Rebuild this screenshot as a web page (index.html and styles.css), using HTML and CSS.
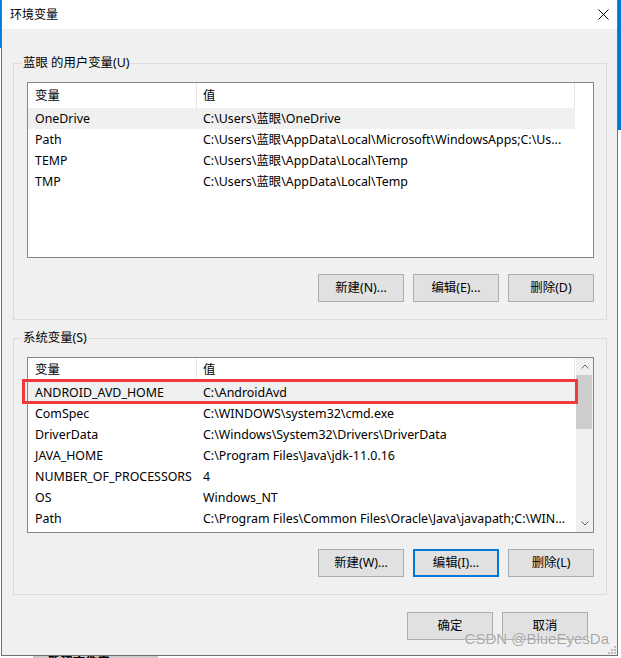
FILE: index.html
```html
<!DOCTYPE html>
<html lang="zh-CN">

<head>
  <meta charset="UTF-8">
  <meta name="viewport" content="width=device-width, initial-scale=1.0">
  <title>环境变量</title>
  <link rel="stylesheet" href="styles.css">
</head>

<body>

  <div class="window">
    <div class="titlebar">
      <span class="title">环境变量</span>
      <span class="close">
        <svg width="11" height="11" viewBox="0 0 11 11">
          <path d="M0.5 0.5 L10.5 10.5 M10.5 0.5 L0.5 10.5" stroke="#000" stroke-width="1" fill="none" />
        </svg>
      </span>
    </div>

    <div class="client">
      <fieldset class="group">
        <legend>蓝眼 的用户变量(U)</legend>
        <div class="list">
          <div class="rows">
            <div class="row head tall"><span class="name">变量</span><span class="value">值</span></div>
            <div class="row selected"><span class="name">OneDrive</span><span class="value">C:\Users\蓝眼\OneDrive</span></div>
            <div class="row"><span class="name">Path</span><span class="value">C:\Users\蓝眼\AppData\Local\Microsoft\WindowsApps;C:\Us...</span></div>
            <div class="row"><span class="name">TEMP</span><span class="value">C:\Users\蓝眼\AppData\Local\Temp</span></div>
            <div class="row"><span class="name">TMP</span><span class="value">C:\Users\蓝眼\AppData\Local\Temp</span></div>
          </div>
          <div class="scroll-space"></div>
        </div>
        <div class="buttons">
          <button class="btn">新建(N)...</button>
          <button class="btn">编辑(E)...</button>
          <button class="btn">删除(D)</button>
        </div>
      </fieldset>

      <fieldset class="group">
        <legend>系统变量(S)</legend>
        <div class="list">
          <div class="rows">
            <div class="row head"><span class="name">变量</span><span class="value">值</span></div>
            <div class="row selected"><span class="name">ANDROID_AVD_HOME</span><span class="value">C:\AndroidAvd</span></div>
            <div class="row"><span class="name">ComSpec</span><span class="value">C:\WINDOWS\system32\cmd.exe</span></div>
            <div class="row"><span class="name">DriverData</span><span class="value">C:\Windows\System32\Drivers\DriverData</span></div>
            <div class="row"><span class="name">JAVA_HOME</span><span class="value">C:\Program Files\Java\jdk-11.0.16</span></div>
            <div class="row"><span class="name">NUMBER_OF_PROCESSORS</span><span class="value">4</span></div>
            <div class="row"><span class="name">OS</span><span class="value">Windows_NT</span></div>
            <div class="row"><span class="name">Path</span><span class="value">C:\Program Files\Common Files\Oracle\Java\javapath;C:\WIN...</span></div>
          </div>
          <div class="scroll">
            <div class="arrow">
              <svg width="8" height="5" viewBox="0 0 8 5"><path d="M0.5 4.5 L4 1 L7.5 4.5" stroke="#606060" fill="none" /></svg>
            </div>
            <div class="thumb"></div>
            <div class="track"></div>
            <div class="arrow">
              <svg width="8" height="5" viewBox="0 0 8 5"><path d="M0.5 0.5 L4 4 L7.5 0.5" stroke="#606060" fill="none" /></svg>
            </div>
          </div>
          <!-- red frame around the selected row -->
          <div class="mark"></div>
        </div>
        <div class="buttons">
          <button class="btn">新建(W)...</button>
          <button class="btn focus">编辑(I)...</button>
          <button class="btn">删除(L)</button>
        </div>
      </fieldset>

      <div class="footer">
        <button class="btn">确定</button>
        <button class="btn">取消</button>
      </div>
    </div>

    <div class="watermark">CSDN @BlueEyesDa</div>
    <svg class="grip" width="8" height="8" viewBox="0 0 8 8">
      <g fill="#bdbdbd">
        <rect x="6" y="0" width="2" height="2" />
        <rect x="3" y="3" width="2" height="2" />
        <rect x="6" y="3" width="2" height="2" />
        <rect x="0" y="6" width="2" height="2" />
        <rect x="3" y="6" width="2" height="2" />
        <rect x="6" y="6" width="2" height="2" />
      </g>
    </svg>
  </div>

  <div class="under"><span>新建文件夹</span></div>

</body>

</html>
```

FILE: styles.css
```css
* {
  box-sizing: border-box;
}

html,
body {
  margin: 0;
}

body {
  width: 621px;
  height: 658px;
  overflow: hidden;
  font: 12.4px/16px "Noto Sans", "Noto Sans CJK SC", sans-serif;
  color: #000;
  background:
    linear-gradient(#0078d7, #0078d7) 0 0 / 1px 48px no-repeat,
    linear-gradient(#0078d7, #0078d7) 100% 0 / 3px 130px no-repeat,
    #fff;
}

.window {
  position: relative;
  margin-left: 1px;
  width: 617px;
  height: 656px;
  border: 1px solid #707070;
  border-top: 0;
  display: flex;
  flex-direction: column;
}

.titlebar {
  height: 29px;
  flex: none;
  background: #fff;
  display: flex;
  align-items: center;
  justify-content: space-between;
  padding: 0 8px 0 8px;
}

.title {
  font-size: 12px;
  line-height: 28px;
}

.close svg {
  display: block;
}

.client {
  flex: 1;
  background: #f0f0f0;
  padding-top: 26px;
  display: flex;
  flex-direction: column;
}

.group {
  margin: 0 10px 0 11px;
  padding: 11px 12px 17px 13px;
  border: 1px solid #dcdcdc;
  min-width: 0;
}

.group + .group {
  margin-top: 10px;
}

.group legend {
  margin-left: -5px;
  padding: 0 1px;
  line-height: 16px;
}

.list {
  position: relative;
  height: 176px;
  border: 1px solid #828790;
  background: #fff;
  display: flex;
}

.rows {
  flex: 1;
  min-width: 0;
}

.row {
  display: grid;
  grid-template-columns: 168px 1fr;
  height: 21px;
  line-height: 21px;
  white-space: nowrap;
}

.row span {
  overflow: hidden;
  padding-left: 7px;
}

.row.head {
  height: 24px;
  line-height: 24px;
}

.row.head.tall {
  height: 25px;
  line-height: 25px;
}

.row.head .value {
  border-left: 1px solid #e5e5e5;
  border-right: 1px solid #e5e5e5;
  padding-left: 6px;
}

.row.selected {
  background: #f0f0f0;
}

.scroll-space {
  width: 18px;
}

.scroll {
  width: 18px;
  border-left: 1px solid #fff;
  background: #f0f0f0;
  display: flex;
  flex-direction: column;
}

.scroll .arrow {
  height: 17px;
  display: flex;
  align-items: center;
  justify-content: center;
}

.scroll .arrow svg {
  display: block;
}

.scroll .thumb {
  height: 54px;
  margin: 0 1px 0 0;
  background: #cdcdcd;
}

.scroll .track {
  flex: 1;
}

.mark {
  position: absolute;
  left: -6px;
  top: 21px;
  width: 556px;
  height: 25px;
  border: 3px solid #ee3a3a;
}

.buttons {
  display: flex;
  justify-content: flex-end;
  gap: 9px;
  margin-top: 16px;
}

.btn {
  width: 86px;
  height: 28px;
  padding: 0;
  border: 1px solid #adadad;
  background: #e1e1e1;
  font: inherit;
  color: #000;
}

.btn.focus {
  border: 2px solid #0078d7;
}

.footer {
  display: flex;
  justify-content: flex-end;
  gap: 9px;
  margin: 17px 29px 0 0;
}

.watermark {
  position: absolute;
  right: 8px;
  top: 630px;
  font: 15px/18px "Liberation Sans", Arial, sans-serif;
  color: rgba(150, 150, 150, 0.85);
  text-shadow: 0 0 1px #fff;
}

.grip {
  position: absolute;
  right: 1px;
  bottom: 1px;
}

.under {
  margin-left: 33px;
  width: 125px;
  height: 2px;
  overflow: hidden;
  background: #c9c9c9;
  padding-left: 15px;
  font-weight: bold;
  line-height: 12px;
}
```
